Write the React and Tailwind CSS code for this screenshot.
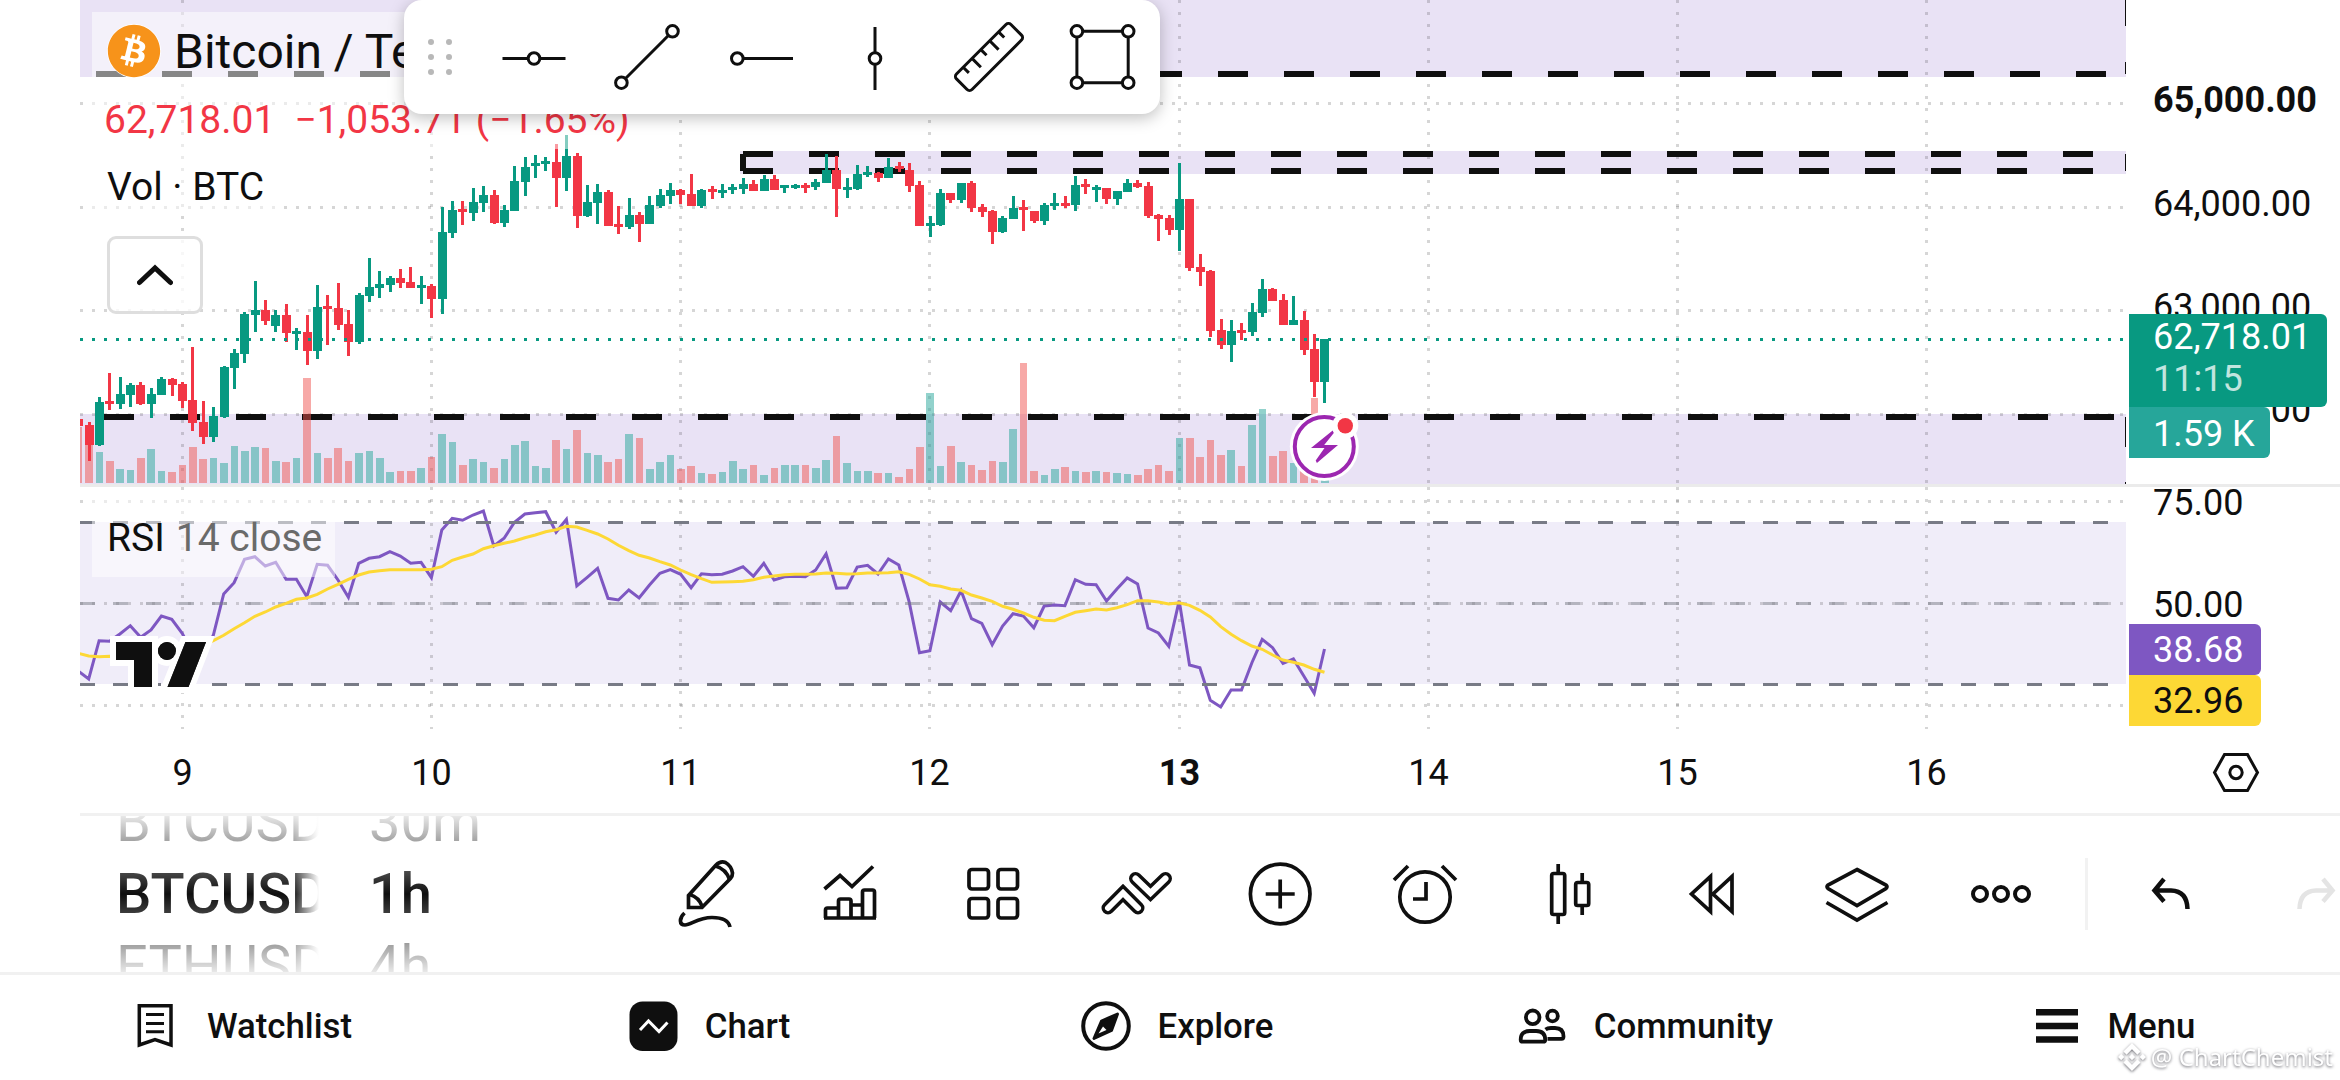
import { FaBitcoin } from 'react-icons/fa'
import { SiBinance } from 'react-icons/si'

const INK = '#0f0f0f'
const UP = '#089981'
const DOWN = '#f23645'

// Hourly bars: [direction, high, body top, body bottom, low, volume top], in chart pixels.
// The first bar sits ten hours before the "9" gridline.
const CANDLES = [
  ['d', 419, 419, 426, 426, 427], ['d', 422, 425, 445, 461, 445], ['u', 397, 402, 445, 446, 452],
  ['d', 373, 401, 404, 410, 461], ['u', 377, 394, 404, 409, 469], ['u', 383, 385, 395, 407, 470],
  ['d', 382, 385, 404, 405, 458], ['u', 388, 394, 404, 418, 449], ['u', 377, 379, 395, 395, 471],
  ['d', 378, 379, 385, 396, 472], ['d', 382, 384, 401, 408, 465], ['d', 347, 400, 423, 431, 447],
  ['d', 401, 422, 437, 444, 459], ['u', 407, 416, 437, 442, 458], ['u', 366, 367, 417, 418, 463],
  ['u', 349, 353, 368, 389, 446], ['u', 312, 314, 354, 363, 451], ['u', 281, 310, 315, 332, 447],
  ['d', 300, 310, 321, 325, 448], ['u', 310, 315, 326, 332, 461], ['d', 304, 315, 333, 342, 462],
  ['u', 328, 331, 334, 350, 458], ['d', 315, 332, 351, 365, 378], ['u', 285, 307, 351, 359, 453],
  ['d', 295, 306, 309, 345, 458], ['d', 283, 308, 325, 330, 448], ['d', 310, 324, 342, 356, 461],
  ['u', 293, 295, 342, 344, 453], ['u', 258, 287, 296, 302, 451], ['u', 271, 284, 288, 298, 458],
  ['u', 276, 278, 285, 292, 472], ['d', 269, 278, 283, 288, 471], ['d', 267, 282, 288, 288, 471],
  ['u', 276, 285, 288, 304, 468], ['d', 284, 286, 299, 318, 457], ['u', 207, 232, 299, 314, 434],
  ['u', 201, 210, 233, 238, 442], ['d', 201, 209, 212, 225, 465], ['u', 188, 202, 213, 221, 459],
  ['u', 186, 195, 203, 212, 462], ['d', 190, 195, 223, 224, 468], ['u', 205, 210, 223, 227, 459],
  ['u', 166, 181, 211, 211, 445], ['u', 157, 167, 182, 196, 441], ['u', 155, 163, 166, 178, 466],
  ['u', 157, 161, 164, 171, 468], ['d', 144, 162, 178, 207, 440], ['u', 135, 156, 178, 191, 449],
  ['d', 153, 156, 216, 228, 430], ['u', 185, 202, 216, 217, 453], ['u', 184, 192, 203, 224, 455],
  ['d', 190, 192, 226, 226, 462], ['d', 206, 224, 227, 234, 459], ['u', 198, 215, 227, 229, 434],
  ['d', 212, 215, 224, 242, 438], ['u', 196, 205, 224, 224, 469], ['u', 189, 195, 206, 208, 462],
  ['u', 183, 190, 196, 204, 455], ['d', 189, 190, 195, 204, 469], ['d', 174, 194, 206, 206, 466],
  ['u', 189, 190, 206, 208, 473], ['d', 186, 189, 192, 199, 474], ['u', 184, 190, 193, 198, 472],
  ['u', 184, 187, 190, 194, 461], ['u', 178, 184, 189, 194, 469], ['d', 180, 184, 191, 191, 465],
  ['u', 175, 179, 191, 191, 475], ['d', 175, 179, 190, 190, 468], ['u', 185, 185, 188, 193, 465],
  ['u', 184, 185, 188, 189, 465], ['d', 183, 185, 188, 193, 465], ['u', 179, 182, 187, 190, 468],
  ['u', 154, 170, 183, 183, 460], ['d', 156, 170, 189, 217, 436], ['u', 178, 187, 190, 198, 463],
  ['u', 165, 174, 189, 190, 471], ['u', 166, 172, 175, 177, 471], ['d', 172, 173, 178, 182, 473],
  ['u', 158, 167, 178, 178, 473], ['d', 162, 166, 169, 172, 477], ['d', 163, 170, 186, 192, 469],
  ['d', 181, 185, 226, 226, 447], ['u', 216, 223, 226, 237, 393], ['u', 189, 193, 225, 226, 466],
  ['d', 193, 193, 200, 203, 446], ['u', 183, 183, 200, 203, 462], ['d', 181, 183, 208, 212, 465],
  ['d', 204, 207, 212, 217, 470], ['d', 210, 211, 232, 244, 461], ['u', 216, 218, 232, 233, 462],
  ['u', 196, 208, 219, 219, 429], ['d', 200, 207, 210, 231, 363], ['d', 211, 211, 221, 223, 471],
  ['u', 203, 205, 221, 225, 475], ['u', 193, 203, 206, 210, 469], ['d', 196, 203, 206, 208, 467],
  ['u', 176, 185, 205, 211, 471], ['d', 179, 184, 187, 194, 472], ['u', 185, 187, 190, 202, 471],
  ['d', 188, 188, 199, 204, 472], ['u', 191, 191, 199, 205, 473], ['u', 179, 183, 192, 192, 474],
  ['d', 180, 183, 187, 188, 475], ['d', 182, 186, 216, 218, 469], ['d', 214, 215, 219, 241, 465],
  ['d', 215, 218, 230, 235, 471], ['u', 163, 199, 230, 251, 438], ['d', 199, 199, 268, 271, 438],
  ['d', 254, 267, 272, 286, 457], ['d', 270, 271, 331, 337, 440], ['d', 319, 330, 345, 349, 455],
  ['u', 320, 331, 345, 362, 450], ['d', 323, 330, 333, 340, 466], ['u', 303, 312, 332, 336, 425],
  ['u', 279, 289, 313, 317, 409], ['d', 288, 289, 301, 301, 456], ['d', 294, 300, 325, 325, 451],
  ['u', 296, 320, 325, 325, 463], ['d', 311, 320, 350, 355, 470], ['d', 334, 349, 382, 397, 398],
  ['u', 339, 339, 382, 403, 480],
]

// Oscillator readings per bar, in thirds of a pixel below y = 480.
const RSI = [
  574, 597, 482, 484, 462, 437, 472, 450, 408, 418, 460, 520, 530, 465, 342, 308, 238, 230, 258, 247,
  298, 298, 350, 253, 256, 300, 352, 250, 235, 230, 215, 228, 250, 247, 293, 150, 115, 121, 105, 93,
  198, 175, 127, 102, 98, 95, 157, 118, 318, 292, 265, 355, 360, 330, 354, 315, 280, 269, 283, 323,
  281, 284, 283, 273, 260, 289, 250, 300, 290, 289, 290, 270, 221, 325, 323, 261, 256, 282, 237, 255,
  365, 518, 512, 366, 392, 332, 416, 430, 494, 438, 401, 408, 443, 378, 375, 377, 299, 313, 314, 363,
  327, 294, 312, 444, 459, 499, 362, 555, 563, 661, 681, 630, 630, 548, 478, 503, 550, 537, 588, 640,
  507,
]
const RSI_MA = [
  520, 528, 530, 529, 530, 530, 530, 528, 524, 520, 515, 508, 496, 482, 466, 446, 428, 409, 396, 381,
  370, 358, 354, 343, 327, 313, 298, 285, 276, 272, 269, 269, 269, 269, 268, 260, 241, 231, 222, 206,
  197, 190, 183, 173, 165, 155, 149, 139, 141, 151, 162, 177, 196, 212, 226, 234, 245, 255, 270, 284,
  296, 307, 306, 305, 304, 299, 292, 288, 284, 283, 283, 282, 279, 280, 282, 281, 279, 279, 278, 275,
  283, 297, 314, 319, 327, 331, 345, 354, 364, 379, 388, 399, 412, 421, 422, 409, 397, 392, 387, 390,
  383, 374, 362, 362, 366, 372, 368, 376, 391, 411, 440, 463, 482, 498, 508, 525, 540, 547, 555, 568,
  577,
]

const DAYS = [
  { label: '9', x: 182.5 },
  { label: '10', x: 431.5 },
  { label: '11', x: 680.5 },
  { label: '12', x: 929.5 },
  { label: '13', x: 1179.5, bold: true },
  { label: '14', x: 1428.5 },
  { label: '15', x: 1677.5 },
  { label: '16', x: 1926.5 },
]

const barLeft = (i) => 178 + (i - 10) * 10.385
const linePoints = (values) => values.map((v, i) => `${(barLeft(i) + 4.2).toFixed(1)},${(480 + v / 3).toFixed(1)}`).join(' ')

function Dotted({ y, color = 'rgba(50,50,50,0.2)' }) {
  return <line x1="80" x2="2126" y1={y} y2={y} stroke={color} strokeWidth="3" strokeDasharray="3 9" />
}

function DayLines({ from, to }) {
  return DAYS.map((d) => (
    <line key={d.label} x1={d.x} x2={d.x} y1={from} y2={to} stroke="rgba(50,50,50,0.2)" strokeWidth="3" strokeDasharray="3 9" />
  ))
}

function ZoneEdge({ x, y }) {
  return <line x1={x} x2="2126" y1={y} y2={y} stroke={INK} strokeWidth="6" strokeDasharray="30 36" />
}

function PriceChart() {
  return (
    <svg viewBox="80 0 2046 484" className="block h-[484px] w-[2046px]" shapeRendering="crispEdges">
      <rect x="80" y="0" width="2046" height="77" fill="#e9e2f5" />
      <rect x="740" y="151" width="1386" height="23" fill="#e9e2f5" />
      <rect x="80" y="414" width="2046" height="70" fill="#e9e2f5" />
      <Dotted y={103.5} />
      <Dotted y={207.5} />
      <Dotted y={310.5} />
      <Dotted y={414.5} />
      <DayLines from={0} to={484} />

      <ZoneEdge x={96} y={74} />
      <ZoneEdge x={743} y={154} />
      <ZoneEdge x={743} y={171} />
      <rect x="740" y="154" width="6" height="17" fill={INK} />
      <ZoneEdge x={103.5} y={417} />
      <path d="M2125.5 0V26M2125.5 62V74M2125.5 154V171M2125.5 417V447M2125.5 482V484" stroke={INK} strokeWidth="1" />

      {CANDLES.map((c, i) => {
        const left = Math.round(barLeft(i) + 0.6)
        const right = Math.round(barLeft(i) + 8.2)
        return (
          <rect
            key={i}
            x={left}
            y={c[5]}
            width={right - left}
            height={483 - c[5]}
            fill={c[0] === 'u' ? '#26a69a' : '#ef5350'}
            fillOpacity="0.5"
          />
        )
      })}
      {CANDLES.map(([dir, high, top, bottom, low], i) => {
        const x = Math.round(barLeft(i))
        return (
          <g key={i} fill={dir === 'u' ? UP : DOWN}>
            <rect x={x + 3} y={high} width="3" height={low - high} />
            <rect x={x} y={top} width="9" height={bottom - top} />
          </g>
        )
      })}
      <Dotted y={339.5} color={UP} />

      {/* event marker under the last bar */}
      <g shapeRendering="auto">
        <circle cx="1324.3" cy="446.5" r="34.5" fill="#fff" />
        <circle cx="1324.3" cy="446.5" r="29.5" fill="none" stroke="#9c27b0" strokeWidth="4" />
        <path d="M1332.7 430.5L1311 448h13.5l-8.8 12.5 1.2 2.5L1338 445h-13.8l9.6-12z" fill="#9c27b0" />
        <circle cx="1345.3" cy="425.8" r="13" fill="#fff" />
        <circle cx="1345.3" cy="425.8" r="7.7" fill={DOWN} />
      </g>
    </svg>
  )
}

function RsiChart() {
  return (
    <svg viewBox="80 487 2046 242" className="block h-[242px] w-[2046px]">
      <rect x="80" y="522" width="2046" height="162" fill="#f0edf9" />
      <g shapeRendering="crispEdges">
        <Dotted y={501.5} />
        <Dotted y={603.5} />
        <Dotted y={705.5} />
        <DayLines from={487} to={729} />
      </g>
      <polyline points={linePoints(RSI)} fill="none" stroke="#7e57c2" strokeWidth="3" />
      <g strokeWidth="3" strokeDasharray="15 18" shapeRendering="crispEdges">
        <path d="M80 522.5H2126" stroke="#787b86" />
        <path d="M80 603.5H2126" stroke="#787b86" strokeOpacity="0.5" />
        <path d="M80 684.5H2126" stroke="#787b86" />
      </g>
      <polyline points={linePoints(RSI_MA)} fill="none" stroke="#fdd835" strokeWidth="3" />
      {/* brand mark with its white halo */}
      <g fill={INK} stroke="#fff" strokeWidth="12" paintOrder="stroke">
        <path d="M116 642H152V687H134V660H116Z" />
        <circle cx="167" cy="651" r="9" />
        <path d="M185.500 642H206L188.500 687H167.500Z" />
      </g>
      <g fill={INK}>
        <path d="M116 642H152V687H134V660H116Z" />
        <circle cx="167" cy="651" r="9" />
        <path d="M185.500 642H206L188.500 687H167.500Z" />
      </g>
    </svg>
  )
}

function AxisText({ y, bold, children }) {
  return (
    <text x="2153" y={y} fontSize="36" fontWeight={bold ? 700 : 400} fill={INK}>
      {children}
    </text>
  )
}

function Legend() {
  return (
    <div className="absolute left-3 top-3 flex flex-col items-start leading-none text-[#0f0f0f]">
      <div className="flex h-20 w-[420px] items-center gap-[13px] whitespace-nowrap bg-white/50 pl-[15px]">
        <span className="-mt-[2px] rounded-full bg-white">
          <FaBitcoin className="size-[54px] text-[#f7931a]" />
        </span>
        <span className="text-[48px]">Bitcoin / TetherUS</span>
      </div>
      <div className="flex h-[57px] items-center gap-[19px] bg-white/50 px-[12px] text-[39px] text-[#f23645]">
        <span>62,718.01</span>
        <span>−1,053.71 (−1.65%)</span>
      </div>
      <div className="flex h-[64px] items-center bg-white/50 px-[15px] pt-[13px] text-[39px]">Vol · BTC</div>
      <button className="ml-[15px] mt-[23px] flex h-[78px] w-[96px] items-center justify-center rounded-[9px] border-[3px] border-[#dedede] bg-white/80">
        <svg viewBox="0 0 36 24" className="h-6 w-9" fill="none" stroke={INK} strokeWidth="5">
          <path d="M2.500 19.500L18 5l15.500 14.500" strokeLinecap="round" />
        </svg>
      </button>
    </div>
  )
}

const DRAW_TOOLS = {
  horizontalLine: (
    <>
      <path d="M4.500 37.500H30M42 37.500H67.500" />
      <circle cx="36" cy="37.500" r="5.800" />
    </>
  ),
  trendLine: (
    <>
      <path d="M13.500 57.500L56.400 14.500" />
      <circle cx="9.400" cy="61.700" r="5.800" />
      <circle cx="60.500" cy="10.300" r="5.800" />
    </>
  ),
  horizontalRay: (
    <>
      <path d="M18 37.500H68" />
      <circle cx="12.300" cy="37.500" r="5.800" />
    </>
  ),
  verticalLine: (
    <>
      <path d="M36 6V31.500M36 43.500V69" />
      <circle cx="36" cy="37.500" r="5.800" />
    </>
  ),
  ruler: (
    <g transform="translate(36 36) rotate(-45)">
      <rect x="-38.500" y="-11" width="77" height="22" rx="3.500" />
      <path d="M-25.500 -11v8M-13 -11v12.500M-.5 -11v8M12 -11v12.500M24.500 -11v8" />
    </g>
  ),
  rectangle: (
    <>
      <path d="M16 10.300H55M16 61.700H55M9.900 16.500V55.500M61.200 16.500V55.500" />
      <circle cx="9.900" cy="10.300" r="5.800" />
      <circle cx="61.200" cy="10.300" r="5.800" />
      <circle cx="9.900" cy="61.700" r="5.800" />
      <circle cx="61.200" cy="61.700" r="5.800" />
    </>
  ),
}

function DrawingToolbar() {
  return (
    <div className="absolute left-[324px] top-0 flex h-[114px] w-[756px] items-center rounded-[18px] bg-white shadow-[0_4px_16px_rgba(0,0,0,0.25)]">
      <div className="grid shrink-0 grid-cols-2 gap-x-3 gap-y-[9px] pl-6 pr-[25px]">
        {Array.from({ length: 6 }).map((_, i) => (
          <span key={i} className="size-[6px] rounded-full bg-[#b8b8b8]" />
        ))}
      </div>
      {Object.entries(DRAW_TOOLS).map(([name, shape]) => (
        <button key={name} className="flex w-[113.800px] shrink-0 justify-center">
          <svg viewBox="0 0 72 72" className="size-[72px] overflow-visible" fill="none" stroke={INK} strokeWidth="3">
            {shape}
          </svg>
        </button>
      ))}
    </div>
  )
}

const TOOLS = {
  draw: (
    <>
      <path d="M18.500 49.500V37.500L46 7Q50.500 2.500 55.500 4.500Q61.500 8 62.500 15Q62.500 18.500 60.500 20.500L32 49.500Z" />
      <path d="M45.500 8Q56 11 59.500 21.500M19.500 36.500Q29 39 32.500 49" />
      <path d="M14.500 55C9 60 9 67 15 67C21 67 28 59.500 42 59.500C54 59.500 59 64 60 69" />
    </>
  ),
  indicators: (
    <>
      <path d="M10.500 31L26 17.500L38 28.500L59 8.500" />
      <path d="M10 60H62M11.500 60V52q0-2 2-2H24.500M24.500 60V43q0-2 2-2h8.500q2 0 2 2V60M37 47H48.500M48.500 60V34q0-2 2-2h8q2 0 2 2V60" />
    </>
  ),
  layouts: (
    <>
      <rect x="11" y="11.500" width="19.500" height="19.500" rx="3" />
      <rect x="40" y="11.500" width="19.500" height="19.500" rx="3" />
      <rect x="11" y="40.500" width="19.500" height="19.500" rx="3" />
      <rect x="40" y="40.500" width="19.500" height="19.500" rx="3" />
    </>
  ),
  templates: (
    <g strokeLinecap="round">
      <path d="M6 50L21 35L36 50" strokeWidth="13" />
      <path d="M6 50L21 35L36 50" strokeWidth="6" stroke="#fff" />
      <path d="M33.500 20.500L48.500 35L63.500 20.500" strokeWidth="13" />
      <path d="M33.500 20.500L48.500 35L63.500 20.500" strokeWidth="6" stroke="#fff" />
    </g>
  ),
  add: (
    <>
      <circle cx="34.200" cy="36" r="29.800" />
      <path d="M34.200 21.500V50.500M19.700 36H48.700" />
    </>
  ),
  alert: (
    <>
      <circle cx="35" cy="39" r="25.200" />
      <path d="M36 24V41H23M18 8L4 22M52 8L66 22" />
    </>
  ),
  candles: (
    <>
      <rect x="17.700" y="15.500" width="13" height="41" rx="2" />
      <rect x="41.700" y="24.500" width="13" height="23" rx="2" />
      <path d="M24.200 6V15M24.200 57V66M48.200 15V24M48.200 48V57" />
    </>
  ),
  replay: <path d="M33.500 18.500V53.500L14.500 36ZM55 18.500V53.500L36 36Z" />,
  layers: (
    <>
      <path d="M36 11.500L65 27q2 1.500 0 3.500L36 47.500L7 30.500q-2-2 0-3.500Z" />
      <path d="M5.500 44.500L36 62L66.500 44.500" />
    </>
  ),
  more: (
    <g strokeWidth="4">
      <circle cx="15" cy="36" r="7" />
      <circle cx="36" cy="36" r="7" />
      <circle cx="57" cy="36" r="7" />
    </g>
  ),
}

function WheelRow({ active, children }) {
  return (
    <div className={`flex h-[72px] shrink-0 items-center ${active ? 'font-medium' : ''}`}>{children}</div>
  )
}

function BottomToolbar() {
  return (
    <div className="flex h-[156px] items-center">
      <div className="relative flex h-full w-[554.500px] shrink-0 overflow-hidden pl-[36px] text-[56px] leading-none text-[#0f0f0f]">
        <div className="relative flex h-full w-[203px] flex-col justify-center overflow-hidden">
          <WheelRow>BTCUSD</WheelRow>
          <WheelRow active>BTCUSD</WheelRow>
          <WheelRow>ETHUSD</WheelRow>
          <div className="absolute inset-y-0 right-0 w-[26px] bg-linear-to-r from-transparent to-white" />
        </div>
        <div className="ml-[50px] flex h-full flex-col justify-center">
          <WheelRow>30m</WheelRow>
          <WheelRow active>1h</WheelRow>
          <WheelRow>4h</WheelRow>
        </div>
        <div className="absolute inset-0 bg-[linear-gradient(to_bottom,rgba(255,255,255,0.9),rgba(255,255,255,0.62)_16%,rgba(255,255,255,0.22)_37%,transparent_50%,rgba(255,255,255,0.2)_63%,rgba(255,255,255,0.62)_83%,rgba(255,255,255,0.9))]" />
      </div>
      <div className="grid w-[1438.500px] shrink-0 grid-cols-10">
        {Object.entries(TOOLS).map(([name, shape]) => (
          <button key={name} className="flex justify-center">
            <svg viewBox="0 0 72 72" className="size-[72px] overflow-visible" fill="none" stroke={INK} strokeWidth="3.700">
              {shape}
            </svg>
          </button>
        ))}
      </div>
      <div className="ml-[12px] h-[72px] w-[3px] shrink-0 bg-[#f2f2f2]" />
      <button className="ml-[48px] shrink-0">
        <svg viewBox="0 0 72 72" className="size-[72px]" fill="none" stroke={INK} strokeWidth="4.500">
          <path d="M28 21L18.500 32.500L28 43.500M19 32.500H35Q51 33 51.500 51" />
        </svg>
      </button>
      <button className="ml-[71px] shrink-0">
        <svg viewBox="0 0 72 72" className="size-[72px]" fill="none" stroke="#e4e4e4" strokeWidth="4.500">
          <path d="M44 21L53.500 32.500L44 43.500M53 32.500H37Q21 33 20.500 51" />
        </svg>
      </button>
    </div>
  )
}

const NAV = [
  {
    label: 'Watchlist',
    icon: (
      <>
        <path d="M12.300 7.800H44V47L28 41.500L12.300 47Z" fill="none" strokeWidth="3.500" />
        <path d="M19 16.500H37M19 25.500H37M19 33.700H37" strokeWidth="3" />
      </>
    ),
  },
  {
    label: 'Chart',
    icon: (
      <>
        <rect x="4.500" y="3.500" width="48" height="49.500" rx="13" fill={INK} stroke="none" />
        <path d="M15 32L23.500 23L34 33.500L42.500 24.500" fill="none" stroke="#fff" strokeWidth="3" />
      </>
    ),
  },
  {
    label: 'Explore',
    icon: (
      <>
        <circle cx="28" cy="28" r="22.800" fill="none" strokeWidth="4" />
        <path d="M39.500 16L33.500 32.500L16 40.500L23.500 23Z" fill={INK} strokeWidth="3" strokeLinejoin="round" />
        <path d="M25 28.500L28.500 32L20.500 35.500Z" fill="#fff" stroke="none" />
      </>
    ),
  },
  {
    label: 'Community',
    icon: (
      <g fill="none" strokeWidth="3.800">
        <circle cx="18.700" cy="19.300" r="6.800" />
        <path d="M8.700 43.700q-2 0-2-2q0-8.700 9-8.700h6.500q9 0 9 8.700q0 2-2 2z" />
        <circle cx="38.500" cy="18" r="5.300" />
        <path d="M31.500 31.500Q33.500 30 37 30h4q8.500 0 8.500 8.500q0 2.300-2 2.300H33.500" />
      </g>
    ),
  },
  {
    label: 'Menu',
    icon: <path d="M8 14.300H50M8 28H50M8 41.500H50" strokeWidth="6.500" />,
  },
]

function BottomNav() {
  return (
    <nav className="relative grid h-[105px] grid-cols-5">
      {NAV.map(({ label, icon }) => (
        <a key={label} className="flex h-[102px] items-center justify-center gap-6 pl-[11px]">
          <svg viewBox="0 0 56 56" className="size-14" stroke={INK}>
            {icon}
          </svg>
          <span className="text-[34.800px] font-medium leading-none text-[#0f0f0f]">{label}</span>
        </a>
      ))}
      <div className="absolute bottom-[9px] right-[7px] flex items-center gap-[5px] font-['Noto_Sans'] text-[24px] leading-none text-white [filter:drop-shadow(0_1px_1.5px_rgba(40,40,50,0.7))]">
        <SiBinance className="size-[28px]" />
        <span>@ ChartChemist</span>
      </div>
    </nav>
  )
}

export default function App() {
  return (
    <div className="flex h-[1080px] w-[2340px] flex-col overflow-hidden bg-white font-['Roboto',sans-serif]">
      <main className="ml-20 flex h-[816px] shrink-0 flex-col border-b-[3px] border-[#f1f1f1]">
        <section className="relative flex h-[487px] shrink-0 border-b-[3px] border-[#ebebeb]">
          <PriceChart />
          <div className="relative h-[484px] w-[214px]">
            <svg viewBox="2126 0 214 484" className="block h-full w-full">
              <AxisText y={111.5} bold>65,000.00</AxisText>
              <AxisText y={215.5}>64,000.00</AxisText>
              <AxisText y={318.5}>63,000.00</AxisText>
              <AxisText y={422}>62,000.00</AxisText>
            </svg>
            <div className="absolute left-[3px] top-[314px] flex flex-col items-start text-[36px] leading-[42px] text-white">
              <div className="h-[93px] w-[198px] rounded-r-[6px] bg-[#089981] pl-6 pt-[2px]">
                <p>62,718.01</p>
                <p className="text-white/75">11:15</p>
              </div>
              <div className="h-[51px] w-[141px] rounded-r-[6px] bg-[#26a69a] pl-6 pt-[6px]">1.59 K</div>
            </div>
          </div>
          <Legend />
          <DrawingToolbar />
        </section>

        <section className="relative flex h-[242px] shrink-0">
          <RsiChart />
          <div className="relative h-full w-[214px]">
            <svg viewBox="2126 487 214 242" className="block h-full w-full">
              <AxisText y={514.5}>75.00</AxisText>
              <AxisText y={616.5}>50.00</AxisText>
            </svg>
            <div className="absolute left-[3px] top-[137px] flex flex-col text-[36px] leading-[51px]">
              <div className="h-[51px] w-[132px] rounded-r-[6px] bg-[#7e57c2] pl-6 pt-px text-white">38.68</div>
              <div className="h-[51px] w-[132px] rounded-r-[6px] bg-[#fdd835] pl-6 pt-px text-[#0f0f0f]">32.96</div>
            </div>
          </div>
          <div className="absolute left-3 top-3 flex h-[78px] w-[243px] items-center gap-[11px] bg-white/50 pl-[15px] text-[39px] leading-none">
            <span className="text-[#0f0f0f]">RSI</span>
            <span className="whitespace-nowrap text-[#6a6a6a]">14 close</span>
          </div>
        </section>

        <section className="flex h-[84px] shrink-0">
          <svg viewBox="80 729 2046 84" className="block h-full w-[2046px]">
            {DAYS.map((d) => (
              <text key={d.label} x={d.x} y="785" fontSize="36" fontWeight={d.bold ? 700 : 400} textAnchor="middle" fill={INK}>
                {d.label}
              </text>
            ))}
          </svg>
          <div className="flex w-[214px] justify-center pl-[6px] pt-[22px]">
            <svg viewBox="0 0 48 42" className="h-[42px] w-12" fill="none" stroke={INK} strokeWidth="3">
              <path d="M12.500 3.500H35.500L45.500 21.500L35.500 39.500H12.500L2.500 21.500Z" />
              <circle cx="24" cy="21.500" r="6.200" />
            </svg>
          </div>
        </section>
      </main>

      <div className="ml-20 shrink-0">
        <BottomToolbar />
      </div>
      <div className="h-[3px] shrink-0 bg-[#f1f1f1]" />
      <BottomNav />
    </div>
  )
}
